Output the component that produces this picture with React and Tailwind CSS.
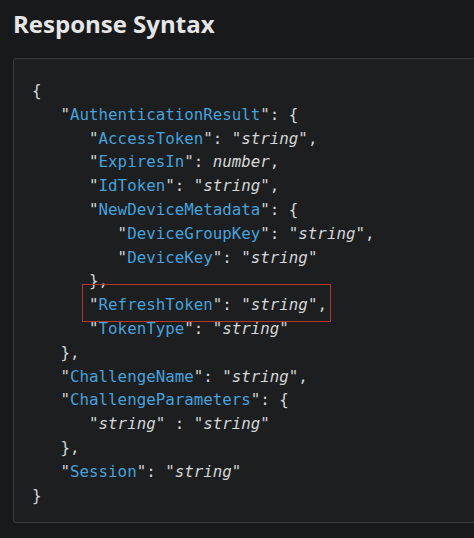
const K = ({ children }) => (
    <>
        "<span className="text-[#47a2dc]">{children}</span>"
    </>
);

const S = () => (
    <>
        "<span className="italic">string</span>"
    </>
);

const lines = [
    { indent: 0, content: <>{'{'}</> },
    { indent: 1, content: <><K>AuthenticationResult</K>: {'{'}</> },
    { indent: 2, content: <><K>AccessToken</K>: <S />,</> },
    { indent: 2, content: <><K>ExpiresIn</K>: <span className="italic">number</span>,</> },
    { indent: 2, content: <><K>IdToken</K>: <S />,</> },
    { indent: 2, content: <><K>NewDeviceMetadata</K>: {'{'}</> },
    { indent: 3, content: <><K>DeviceGroupKey</K>: <S />,</> },
    { indent: 3, content: <><K>DeviceKey</K>: <S /></> },
    { indent: 2, content: <>{'},'}</> },
    { indent: 2, content: <><K>RefreshToken</K>: <S />,</>, boxed: true },
    { indent: 2, content: <><K>TokenType</K>: <S /></> },
    { indent: 1, content: <>{'},'}</> },
    { indent: 1, content: <><K>ChallengeName</K>: <S />,</> },
    { indent: 1, content: <><K>ChallengeParameters</K>: {'{'}</> },
    { indent: 2, content: <><S /> : <S /></> },
    { indent: 1, content: <>{'},'}</> },
    { indent: 1, content: <><K>Session</K>: <S /></> },
    { indent: 0, content: <>{'}'}</> },
];

export default function App() {
    return (
        <div className="w-[474px] h-[538px] overflow-hidden bg-[#18191b] pt-[8px]">
            <h2 className="pl-[13px] text-[24px] font-bold text-[#e6e6e6] leading-[32px] font-['Open_Sans','Noto_Sans',sans-serif]">
                Response Syntax
            </h2>
            <div className="ml-[13px] mt-[18px] w-[520px] h-[465px] bg-[#1c1e20] border border-[#393b3e] rounded-[3px] pt-[20px] pl-[18px]">
                <pre className="font-['DejaVu_Sans_Mono','Liberation_Mono',monospace] text-[15.8px] leading-[23.8px] text-[#d6d6d6]">
                    {lines.map((line, i) => (
                        <div key={i} className="whitespace-pre">
                            {'   '.repeat(line.indent)}
                            {line.boxed ? (
                                <span className="relative">
                                    {line.content}
                                    <span className="absolute -left-[7px] -right-[4px] -top-[11px] -bottom-[8px] border border-[#b8372b] pointer-events-none" />
                                </span>
                            ) : (
                                line.content
                            )}
                        </div>
                    ))}
                </pre>
            </div>
        </div>
    );
}
